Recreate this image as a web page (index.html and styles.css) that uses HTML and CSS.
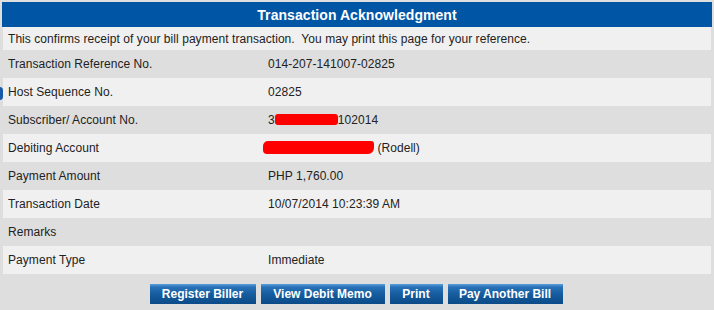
FILE: index.html
```html
<!DOCTYPE html>
<html lang="en">

<head>
    <meta charset="UTF-8">
    <title>Transaction Acknowledgment</title>
    <link rel="stylesheet" href="styles.css">
</head>

<body>

    <div class="side-tab"></div>

    <div class="ack">
        <div class="ack-title">Transaction Acknowledgment</div>
        <div class="ack-intro">This confirms receipt of your bill payment transaction.&nbsp; You may print this page for your reference.</div>

        <div class="ack-row dark">
            <div class="label">Transaction Reference No.</div>
            <div class="value">014-207-141007-02825</div>
        </div>
        <div class="ack-row">
            <div class="label">Host Sequence No.</div>
            <div class="value">02825</div>
        </div>
        <div class="ack-row dark">
            <div class="label">Subscriber/ Account No.</div>
            <div class="value">3<span class="redact redact-acct"></span>102014</div>
        </div>
        <div class="ack-row">
            <div class="label">Debiting Account</div>
            <div class="value"><span class="redact redact-debit"></span> (Rodell)</div>
        </div>
        <div class="ack-row dark">
            <div class="label">Payment Amount</div>
            <div class="value">PHP 1,760.00</div>
        </div>
        <div class="ack-row">
            <div class="label">Transaction Date</div>
            <div class="value">10/07/2014 10:23:39 AM</div>
        </div>
        <div class="ack-row dark">
            <div class="label">Remarks</div>
            <div class="value"></div>
        </div>
        <div class="ack-row">
            <div class="label">Payment Type</div>
            <div class="value">Immediate</div>
        </div>

        <div class="ack-buttons">
            <button class="btn btn-register">Register Biller</button>
            <button class="btn btn-memo">View Debit Memo</button>
            <button class="btn btn-print">Print</button>
            <button class="btn btn-pay">Pay Another Bill</button>
        </div>
    </div>

</body>

</html>
```

FILE: styles.css
```css
body {
    font-family: 'Liberation Sans', Arial, sans-serif;
    font-size: 12px;
    letter-spacing: 0.06px;
    color: #222;
    margin: 0;
    padding: 0;
    background-color: #dedede;
    height: 310px;
    overflow: hidden;
}

.side-tab {
    position: absolute;
    left: -4px;
    top: 87px;
    width: 7px;
    height: 13px;
    border-radius: 4px;
    background-color: #1a5aa8;
}

.ack {
    margin: 0 2px 0 2px;
    padding-top: 2px;
}

.ack-title {
    background-color: #0055a5;
    color: white;
    font-weight: bold;
    font-size: 14px;
    text-align: center;
    height: 25px;
    line-height: 26px;
}

.ack-intro {
    background-color: #f0f0f0;
    height: 23px;
    line-height: 24px;
    padding-left: 5px;
    margin-left: 1px;
    margin-right: 1px;
}

.ack-row {
    display: flex;
    height: 28px;
    line-height: 28px;
    background-color: #f0f0f0;
    margin-left: 1px;
    margin-right: 1px;
}

.ack-row.dark {
    background-color: #dedede;
}

.label {
    width: 260px;
    padding-left: 5px;
}

.value {
    flex: 1;
}

.redact {
    display: inline-block;
    background-color: #ff0000;
    vertical-align: middle;
    border-radius: 3px;
}

.redact-acct {
    width: 63px;
    height: 11px;
    margin-top: -2px;
}

.redact-debit {
    width: 111px;
    height: 13px;
    margin-left: -5px;
    margin-top: -2px;
    border-radius: 5px 3px 6px 4px;
}

.ack-buttons {
    display: flex;
    justify-content: center;
    gap: 5px;
    padding-top: 10px;
    padding-right: 2px;
}

.btn {
    height: 20px;
    border: none;
    padding: 0;
    color: white;
    font-family: 'Liberation Sans', Arial, sans-serif;
    font-weight: bold;
    font-size: 12px;
    background: linear-gradient(to bottom, #5aa0dc 0%, #2a72b8 15%, #155d9f 50%, #0b4a88 100%);
    cursor: pointer;
}

.btn-register {
    width: 106px;
}

.btn-memo {
    width: 124px;
}

.btn-print {
    width: 53px;
}

.btn-pay {
    width: 115px;
}
```
